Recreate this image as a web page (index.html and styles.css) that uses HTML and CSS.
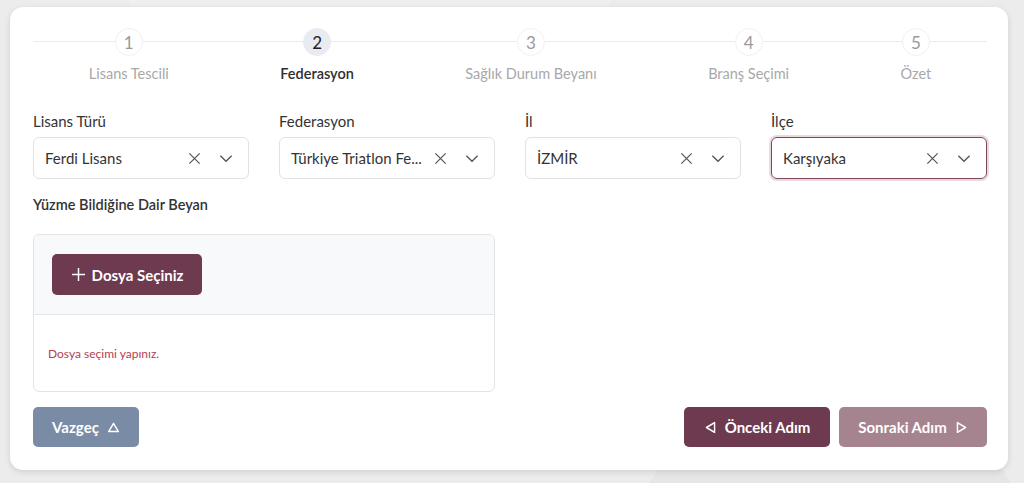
FILE: index.html
```html
<!DOCTYPE html>
<html lang="tr">
<head>
<meta charset="utf-8">
<title>Lisans Başvurusu</title>
<link rel="stylesheet" href="styles.css">
</head>
<body>
<div class="page">
<div class="bg-shape shape-a"></div>
<div class="bg-shape shape-b"></div>
<main class="card">
  <ol class="steps">
    <li class="step"><span class="circle">1</span><span class="step-label">Lisans Tescili</span></li>
    <li class="step active"><span class="circle">2</span><span class="step-label">Federasyon</span></li>
    <li class="step"><span class="circle">3</span><span class="step-label">Sağlık Durum Beyanı</span></li>
    <li class="step"><span class="circle">4</span><span class="step-label">Branş Seçimi</span></li>
    <li class="step"><span class="circle">5</span><span class="step-label">Özet</span></li>
  </ol>

  <div class="fields">
    <div class="field">
      <label class="field-label">Lisans Türü</label>
      <div class="select">
        <span class="select-value">Ferdi Lisans</span>
        <svg class="ico-x" viewBox="0 0 16 16"><path d="M2.5 2.5l11 11M13.5 2.5l-11 11"/></svg>
        <svg class="ico-chev" viewBox="0 0 16 16"><path d="M2 5l6 6 6-6"/></svg>
      </div>
    </div>
    <div class="field">
      <label class="field-label">Federasyon</label>
      <div class="select">
        <span class="select-value" title="Türkiye Triatlon Federasyonu">Türkiye Triatlon Fe...</span>
        <svg class="ico-x" viewBox="0 0 16 16"><path d="M2.5 2.5l11 11M13.5 2.5l-11 11"/></svg>
        <svg class="ico-chev" viewBox="0 0 16 16"><path d="M2 5l6 6 6-6"/></svg>
      </div>
    </div>
    <div class="field">
      <label class="field-label">İl</label>
      <div class="select">
        <span class="select-value">İZMİR</span>
        <svg class="ico-x" viewBox="0 0 16 16"><path d="M2.5 2.5l11 11M13.5 2.5l-11 11"/></svg>
        <svg class="ico-chev" viewBox="0 0 16 16"><path d="M2 5l6 6 6-6"/></svg>
      </div>
    </div>
    <div class="field">
      <label class="field-label">İlçe</label>
      <div class="select focused">
        <span class="select-value">Karşıyaka</span>
        <svg class="ico-x" viewBox="0 0 16 16"><path d="M2.5 2.5l11 11M13.5 2.5l-11 11"/></svg>
        <svg class="ico-chev" viewBox="0 0 16 16"><path d="M2 5l6 6 6-6"/></svg>
      </div>
    </div>
  </div>

  <h3 class="section-title">Yüzme Bildiğine Dair Beyan</h3>

  <div class="upload">
    <div class="upload-head">
      <button class="btn btn-primary btn-file">
        <svg class="ico-plus" viewBox="0 0 16 16"><path d="M8 1v14M1 8h14"/></svg>
        Dosya Seçiniz
      </button>
    </div>
    <div class="upload-body">
      <p class="error">Dosya seçimi yapınız.</p>
    </div>
  </div>

  <div class="actions">
    <button class="btn btn-secondary">Vazgeç
      <svg class="ico-tri" viewBox="0 0 16 16"><path d="M8 3L14 13H2Z"/></svg>
    </button>
    <div class="nav-buttons">
      <button class="btn btn-primary">
        <svg class="ico-tri" viewBox="0 0 16 16"><path d="M3 8L13 2V14Z"/></svg>
        Önceki Adım
      </button>
      <button class="btn btn-primary disabled">Sonraki Adım
        <svg class="ico-tri" viewBox="0 0 16 16"><path d="M13 8L3 2V14Z"/></svg>
      </button>
    </div>
  </div>
</main>
</div>
</body>
</html>
```

FILE: styles.css
```css
* { box-sizing: border-box; }

html, body {
  margin: 0;
  padding: 0;
  overflow: hidden;
}

body {
  background: #ececec;
  font-family: Lato, "Open Sans", "Liberation Sans", sans-serif;
  color: #333;
}

.page {
  position: relative;
  height: 483px;
  overflow: hidden;
  padding: 7px 16px 0 10px;
}

.bg-shape {
  position: absolute;
  border-radius: 50%;
  z-index: 0;
}
.shape-a {
  width: 560px;
  height: 560px;
  left: 90px;
  top: -420px;
  background: #efefef;
}
.shape-b {
  width: 420px;
  height: 420px;
  left: 620px;
  top: 380px;
  background: #e6e6e6;
}

.card {
  position: relative;
  z-index: 1;
  background: #fff;
  border-radius: 13px;
  box-shadow: 0 2px 6px rgba(0, 0, 0, 0.12);
  padding: 21px 21px 22px 23px;
  height: 463px;
}

/* Steps */
.steps {
  list-style: none;
  margin: 0;
  padding: 0;
  display: flex;
  justify-content: space-around;
  position: relative;
}
.steps::before {
  content: "";
  position: absolute;
  left: 0;
  right: 0;
  top: 13px;
  height: 1px;
  background: #ebebeb;
}
.step {
  position: relative;
  display: flex;
  flex-direction: column;
  align-items: center;
}
.circle {
  width: 28px;
  height: 28px;
  border-radius: 50%;
  background: #fff;
  border: 1px solid #f1f1f1;
  display: flex;
  align-items: center;
  justify-content: center;
  font-size: 17px;
  color: #9a9a9a;
}
.step.active .circle {
  background: #e9ebf3;
  border-color: #e9ebf3;
  color: #222;
}
.step-label {
  margin-top: 9px;
  font-size: 14.5px;
  color: #a8a8a8;
  line-height: 18px;
  white-space: nowrap;
}
.step.active .step-label {
  color: #2e2e2e;
  font-weight: 600;
}

/* Fields */
.fields {
  display: grid;
  grid-template-columns: repeat(4, minmax(0, 1fr));
  column-gap: 30px;
  margin-top: 29px;
}
.field-label {
  display: block;
  font-size: 15px;
  color: #333;
  line-height: 18px;
  margin-bottom: 7px;
}
.select {
  height: 42px;
  border: 1px solid #dfe2e6;
  border-radius: 6px;
  display: flex;
  align-items: center;
  padding: 0 14px 0 11px;
}
.select.focused {
  border-color: #7a4a5c;
  box-shadow: 0 0 0 2px #ecd9de;
}
.select-value {
  flex: 1;
  min-width: 0;
  font-size: 15px;
  color: #333;
  white-space: nowrap;
  padding-right: 8px;
}
.ico-x, .ico-chev {
  width: 15px;
  height: 15px;
  fill: none;
  stroke: #555;
  stroke-width: 1.3;
  flex: none;
}
.ico-chev {
  margin-left: 16px;
  width: 16px;
  stroke-width: 1.4;
}

.section-title {
  margin: 17px 0 0;
  font-size: 14.5px;
  font-weight: 600;
  color: #333;
  line-height: 18px;
}

/* Upload */
.upload {
  width: calc((100% - 30px) / 2);
  margin-top: 20px;
  border: 1px solid #e3e4e6;
  border-radius: 6px;
  overflow: hidden;
}
.upload-head {
  background: #f8f9fa;
  border-bottom: 1px solid #e6e7e9;
  padding: 19px 18px;
  height: 80px;
}
.upload-body {
  height: 76px;
  display: flex;
  align-items: center;
  padding: 0 14px;
}
.error {
  margin: 0;
  font-size: 12px;
  color: #b3414f;
}

/* Buttons */
.btn {
  font-family: inherit;
  border: none;
  border-radius: 5px;
  height: 40px;
  color: #fff;
  font-size: 15px;
  font-weight: 700;
  display: inline-flex;
  align-items: center;
  justify-content: center;
  gap: 8px;
  padding: 0 12px;
  white-space: nowrap;
  cursor: pointer;
}
.btn-primary {
  background: #6d3a4f;
}
.btn-primary.disabled {
  background: #a5848f;
}
.btn-secondary {
  background: #7a8ba6;
  width: 106px;
}
.btn-file {
  width: 150px;
  height: 41px;
  gap: 6px;
}
.ico-plus {
  width: 15px;
  height: 15px;
  fill: none;
  stroke: #fff;
  stroke-width: 1.6;
}
.ico-tri {
  width: 13px;
  height: 13px;
  fill: none;
  stroke: #fff;
  stroke-width: 1.8;
  stroke-linejoin: round;
}

.actions {
  display: flex;
  justify-content: space-between;
  margin-top: 15px;
}
.nav-buttons {
  display: flex;
  gap: 9px;
}
.nav-buttons .btn {
  width: 146px;
}
.nav-buttons .btn.disabled {
  width: 148px;
}
```
